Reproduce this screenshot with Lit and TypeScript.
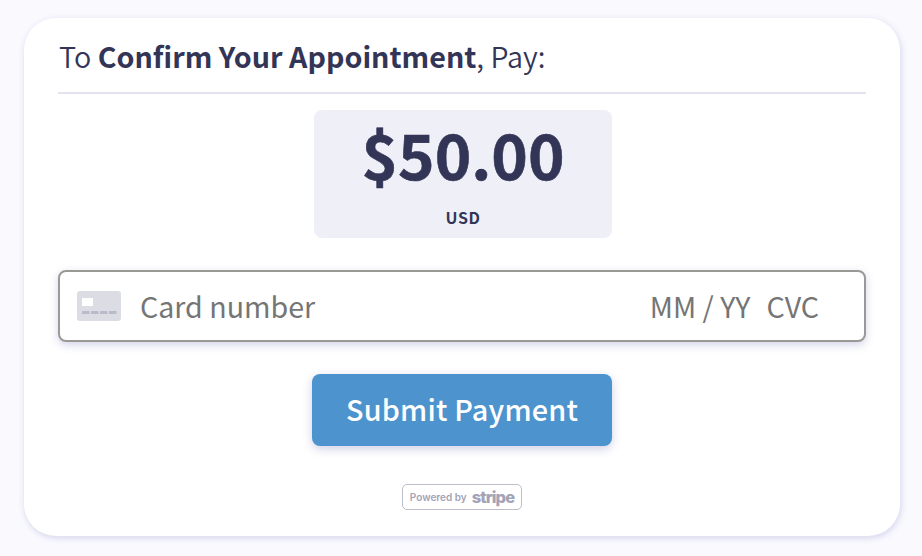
import { LitElement, html, css } from "lit";
import { customElement } from "lit/decorators.js";

@customElement("app-root")
export class AppRoot extends LitElement {
  static styles = css`
    :host {
      display: block;
      width: 922px;
      height: 556px;
      box-sizing: border-box;
      padding: 18px 22px 20px 24px;
      background: #f9f9fe;
      font-family: "Noto Sans CJK SC", "Source Sans Pro", "Noto Sans", sans-serif;
      color: #333556;
      overflow: hidden;
    }
    .card {
      box-sizing: border-box;
      width: 876px;
      height: 518px;
      padding: 0 34px;
      background: #fff;
      border-radius: 32px;
      box-shadow: 1px 2px 6px rgba(98, 100, 180, 0.24);
      display: flex;
      flex-direction: column;
      align-items: center;
    }
    .title {
      align-self: stretch;
      box-sizing: border-box;
      height: 76px;
      padding: 19px 0 0 1px;
      border-bottom: 2px solid #e3e3ee;
      font-size: 28.7px;
      line-height: 38px;
      font-weight: 350;
      white-space: nowrap;
    }
    .title b {
      font-weight: 700;
    }
    .amount {
      box-sizing: border-box;
      width: 298px;
      height: 128px;
      margin: 16px 0 0 2px;
      background: #efeff8;
      border-radius: 8px;
      display: flex;
      flex-direction: column;
      align-items: center;
    }
    .value {
      margin-top: 6px;
      font-size: 62px;
      line-height: 74px;
      font-weight: 700;
      -webkit-text-stroke: 0.6px #333556;
    }
    .currency {
      margin-top: 17px;
      font-size: 16px;
      line-height: 20px;
      font-weight: 700;
      letter-spacing: 0.6px;
    }
    .field {
      align-self: stretch;
      box-sizing: border-box;
      height: 72px;
      margin-top: 32px;
      padding: 0 45px 2px 17px;
      border: 2px solid #9b9995;
      border-radius: 8px;
      background: #fff;
      box-shadow: 0 3px 8px rgba(98, 100, 180, 0.28);
      display: flex;
      align-items: center;
      font-size: 28.6px;
      color: #757575;
    }
    .field svg {
      width: 44px;
      height: 30px;
      flex: none;
      margin: 2px 19px 0 0;
    }
    .number {
      flex: 1;
    }
    .expiry {
      margin-right: 16px;
    }
    .submit {
      box-sizing: border-box;
      width: 300px;
      height: 72px;
      margin-top: 32px;
      border: 0;
      border-radius: 8px;
      background: #4d94ce;
      color: #fff;
      font: inherit;
      font-size: 28.8px;
      font-weight: 500;
      letter-spacing: 0.2px;
      box-shadow: 0 3px 10px rgba(98, 100, 180, 0.3);
      padding: 0 0 4px;
    }
    .badge {
      box-sizing: border-box;
      width: 120px;
      height: 26px;
      margin-top: 38px;
      border: 1px solid #bcbcca;
      border-radius: 5px;
      display: flex;
      align-items: center;
      justify-content: center;
      gap: 5px;
      color: #a3a3b8;
      white-space: nowrap;
    }
    .powered {
      font-family: "Inter", "Noto Sans", sans-serif;
      font-size: 10px;
      font-weight: 600;
    }
    .stripe {
      font-family: "Inter", "Noto Sans", sans-serif;
      font-size: 16.5px;
      line-height: 20px;
      font-weight: 800;
      letter-spacing: -0.9px;
    }
  `;

  render() {
    return html`
      <div class="card">
        <div class="title">To <b>Confirm Your Appointment</b>, Pay:</div>
        <div class="amount">
          <div class="value">$50.00</div>
          <div class="currency">USD</div>
        </div>
        <div class="field">
          <svg viewBox="0 0 44 30" aria-hidden="true">
            <rect width="44" height="30" rx="3" fill="#dcdde4" />
            <rect x="5" y="7" width="11" height="8" rx="0.5" fill="#ffffff" />
            <g fill="#b9bbc9">
              <rect x="5" y="20" width="7.5" height="3" rx="0.5" />
              <rect x="14" y="20" width="7.5" height="3" rx="0.5" />
              <rect x="23" y="20" width="7.5" height="3" rx="0.5" />
              <rect x="32" y="20" width="7.5" height="3" rx="0.5" />
            </g>
          </svg>
          <span class="number">Card number</span>
          <span class="expiry">MM / YY</span>
          <span>CVC</span>
        </div>
        <button class="submit">Submit Payment</button>
        <div class="badge">
          <span class="powered">Powered by</span>
          <span class="stripe">stripe</span>
        </div>
      </div>
    `;
  }
}
